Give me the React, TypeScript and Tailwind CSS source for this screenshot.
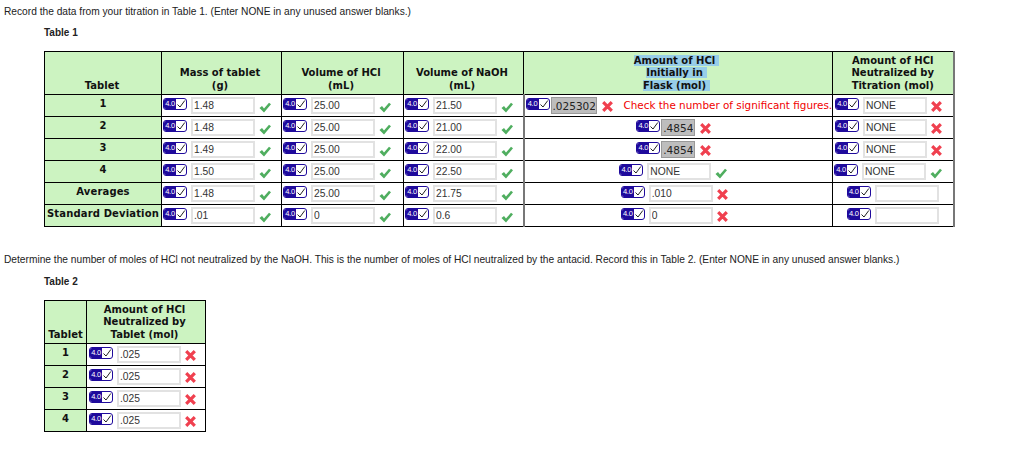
const sans = "font-['Liberation_Sans',Arial,sans-serif]"

function Badge() {
  return (
    <span className="mt-[1px] flex h-[12px] w-[24px] shrink-0 overflow-hidden rounded-[3px] border border-[#1f0a9c] bg-white">
      <span className="flex w-[12px] shrink-0 items-center justify-center bg-[#1f0a9c] font-['Liberation_Sans',sans-serif] text-[7.5px] leading-none tracking-[-0.3px] text-white">
        4.0
      </span>
      <svg viewBox="0 0 10 10" className="h-full w-[10px]">
        <path d="M1.5 5.5 L4 8 L8.8 1.5" fill="none" stroke="#222" strokeWidth="1" />
      </svg>
    </span>
  )
}

function Mark({ ok }: { ok: boolean }) {
  if (ok) {
    return (
      <svg viewBox="0 0 12 11" className="mt-[5px] h-[11px] w-[12px] shrink-0">
        <path d="M0.5 6 L3 4 L5 6.5 L10 0.8 L12 2.2 L5 10.5 Z" fill="#4fae5f" />
      </svg>
    )
  }
  return (
    <svg viewBox="0 0 11 11" className="mt-[4px] h-[11px] w-[11px] shrink-0">
      <path d="M1.2 1.2 L9.8 9.8 M9.8 1.2 L1.2 9.8" fill="none" stroke="#f0404f" strokeWidth="3.2" />
    </svg>
  )
}

function Field({ value, ok, wrong }: { value: string; ok?: boolean; wrong?: boolean }) {
  return (
    <>
      <Badge />
      <input
        readOnly
        value={value}
        className={`ml-[4px] h-[17px] w-[64px] shrink-0 border-2 border-[#e2e2e2] bg-white px-[1px] text-[10.3px] text-[#333] outline-none ${sans}`}
      />
      {ok && <span className="ml-[4px] flex"><Mark ok /></span>}
      {wrong && <span className="ml-[4px] flex"><Mark ok={false} /></span>}
    </>
  )
}

function GreyField({ value, width }: { value: string; width: string }) {
  return (
    <input
      readOnly
      value={value}
      className={`ml-[1px] h-[17px] shrink-0 border border-[#999] bg-[#bdbdbd] px-[1px] font-['DejaVu_Sans',sans-serif] text-[10.5px] text-[#222] outline-none ${width}`}
    />
  )
}

function Cell({ children, pad = 'pl-[1px]', divider }: { children: React.ReactNode; pad?: string; divider?: boolean }) {
  return (
    <td className={`h-[22px] border-t border-b border-black p-0 ${divider ? 'border-r-2 border-r-[#777]' : 'border-r border-r-black'}`}>
      <div className={`flex h-[21px] items-start pt-[2px] ${pad}`}>{children}</div>
    </td>
  )
}

function RowHead({ children }: { children: React.ReactNode }) {
  return (
    <td className="h-[22px] border border-black bg-[#ccf3c1] p-0 pb-[4px] text-center align-middle font-bold tracking-[0.15px]">{children}</td>
  )
}

function HeadCell({ children, className = '' }: { children: React.ReactNode; className?: string }) {
  return (
    <th className={`border border-black bg-[#ccf3c1] p-0 pb-[2px] align-bottom font-bold leading-[12.5px] ${className}`}>{children}</th>
  )
}

const rows = [
  ['1', '1.48', '25.00', '21.50', 'NONE', false],
  ['2', '1.48', '25.00', '21.00', 'NONE', false],
  ['3', '1.49', '25.00', '22.00', 'NONE', false],
  ['4', '1.50', '25.00', '22.50', 'NONE', true],
] as const

function Sel({ children }: { children: React.ReactNode }) {
  return <span className="bg-[#97cde8] pr-[4px]">{children}</span>
}

export default function App() {
  return (
    <div className={`h-[461px] w-[1024px] overflow-hidden bg-white pt-[6px] text-[#222] ${sans}`}>
      <p className="ml-[4px] text-[10.2px] leading-[12px]">
        Record the data from your titration in Table 1. (Enter NONE in any unused answer blanks.)
      </p>
      <p className="ml-[44px] mt-[9px] text-[10px] font-bold leading-[12px]">Table 1</p>

      <table className="ml-[44px] mt-[12px] w-[909px] table-fixed border-collapse font-['DejaVu_Sans',sans-serif] text-[10px] text-[#111]">
        <colgroup>
          <col className="w-[117px]" />
          <col className="w-[120px]" />
          <col className="w-[122px]" />
          <col className="w-[120px]" />
          <col className="w-[309px]" />
          <col className="w-[121px]" />
        </colgroup>
        <thead>
          <tr className="h-[43px]">
            <HeadCell className="pr-[2px]">Tablet</HeadCell>
            <HeadCell className="pr-[3px]">Mass of tablet<br />(g)</HeadCell>
            <HeadCell className="pr-[3px]">Volume of HCl<br />(mL)</HeadCell>
            <HeadCell className="pr-[3px]">Volume of NaOH<br />(mL)</HeadCell>
            <HeadCell className="pr-[3px]"><Sel>Amount of HCl</Sel><br /><Sel>Initially in</Sel><br /><Sel>Flask (mol)</Sel></HeadCell>
            <HeadCell className="border-r-2 border-r-[#777]">Amount of HCl<br />Neutralized by<br />Titration (mol)</HeadCell>
          </tr>
        </thead>
        <tbody>
          {rows.map((r, i) => (
            <tr key={r[0]}>
              <RowHead>{r[0]}</RowHead>
              <Cell><Field value={r[1]} ok /></Cell>
              <Cell><Field value={r[2]} ok /></Cell>
              <Cell divider><Field value={r[3]} ok /></Cell>
              {i === 0 && (
                <Cell>
                  <Badge />
                  <GreyField value=".025302" width="w-[46px]" />
                  <span className="ml-[5px] flex"><Mark ok={false} /></span>
                  <span className="ml-[11px] whitespace-nowrap text-[10.4px] leading-[17px] text-[#f00000]">Check the number of significant figures.</span>
                </Cell>
              )}
              {(i === 1 || i === 2) && (
                <Cell pad="justify-center pr-[9px]">
                  <Badge />
                  <GreyField value=".4854" width="w-[34px]" />
                  <span className="ml-[5px] flex"><Mark ok={false} /></span>
                </Cell>
              )}
              {i === 3 && <Cell pad="justify-center pr-[10px]"><Field value="NONE" ok /></Cell>}
              <Cell divider pad={r[5] ? 'pl-[1px]' : 'pl-[2px]'}>
                <Field value={r[4]} ok={r[5]} wrong={!r[5]} />
              </Cell>
            </tr>
          ))}
          <tr>
            <RowHead>Averages</RowHead>
            <Cell><Field value="1.48" ok /></Cell>
            <Cell><Field value="25.00" ok /></Cell>
            <Cell divider><Field value="21.75" ok /></Cell>
            <Cell pad="justify-center pr-[8px]"><Field value=".010" wrong /></Cell>
            <Cell divider pad="justify-center"><Field value="" /></Cell>
          </tr>
          <tr>
            <RowHead>Standard Deviation</RowHead>
            <Cell><Field value=".01" ok /></Cell>
            <Cell><Field value="0" ok /></Cell>
            <Cell divider><Field value="0.6" ok /></Cell>
            <Cell pad="justify-center pr-[8px]"><Field value="0" wrong /></Cell>
            <Cell divider pad="justify-center"><Field value="" /></Cell>
          </tr>
        </tbody>
      </table>

      <p className="ml-[4px] mt-[27px] text-[10.2px] leading-[12px]">
        Determine the number of moles of HCl not neutralized by the NaOH. This is the number of moles of HCl neutralized by the antacid. Record this in Table 2. (Enter NONE in any unused answer blanks.)
      </p>
      <p className="ml-[44px] mt-[10px] text-[10px] font-bold leading-[12px]">Table 2</p>

      <table className="ml-[44px] mt-[12px] w-[161px] table-fixed border-collapse font-['DejaVu_Sans',sans-serif] text-[10px] text-[#111]">
        <colgroup>
          <col className="w-[42px]" />
          <col className="w-[119px]" />
        </colgroup>
        <thead>
          <tr className="h-[43px]">
            <HeadCell>Tablet</HeadCell>
            <HeadCell className="pr-[3px]">Amount of HCl<br />Neutralized by<br />Tablet (mol)</HeadCell>
          </tr>
        </thead>
        <tbody>
          {['1', '2', '3', '4'].map((n) => (
            <tr key={n}>
              <RowHead>{n}</RowHead>
              <Cell pad="pl-[2px]"><Field value=".025" wrong /></Cell>
            </tr>
          ))}
        </tbody>
      </table>
    </div>
  )
}
